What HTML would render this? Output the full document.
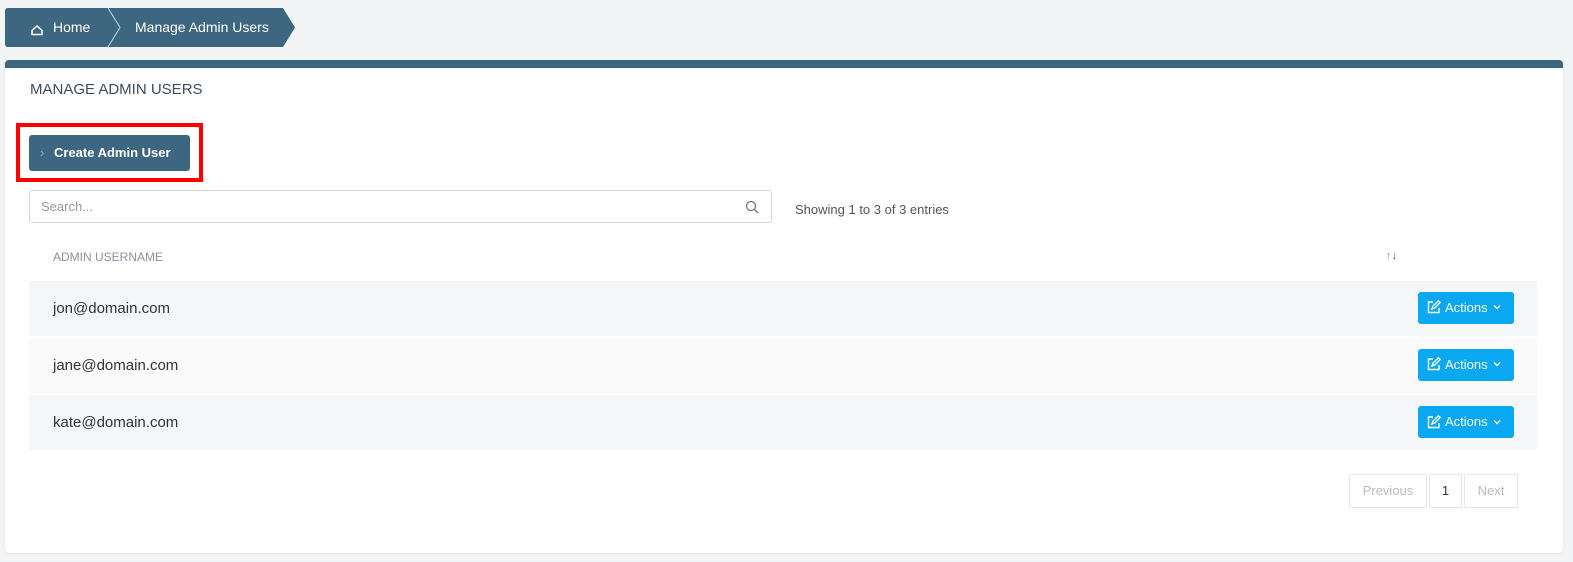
<!DOCTYPE html>
<html><head><style>
*{box-sizing:border-box;margin:0;padding:0}
body{width:1573px;height:562px;background:#f2f4f6;font-family:"Liberation Sans",sans-serif;position:relative;overflow:hidden;color:#333}
.bc{position:absolute;left:5px;top:8px;height:39px;width:290px}
.card{position:absolute;left:5px;top:60px;width:1558px;height:493px;background:#fff;border-top:8px solid #3d6680;border-radius:4px;box-shadow:0 1px 2px rgba(0,0,0,.08)}
.t{position:absolute;font-size:14px}
.row{position:absolute;left:29px;width:1508px;height:55px}
.act{position:absolute;left:1418px;width:96px;height:32px;background:#0aa8f0;border-radius:3px;color:#fff;font-size:13px;line-height:32px;padding-left:27px}
.pg{position:absolute;top:474px;height:34px;border:1px solid #e3e6ea;border-radius:2px;color:#bbb;font-size:13px;line-height:32px;text-align:center}
</style></head><body>
<svg class="bc" viewBox="0 0 290 39" width="290" height="39">
<path d="M3 0H278L290 19.5L278 39H3Q0 39 0 36V3Q0 0 3 0Z" fill="#3d6680"/>
<path d="M103 0L115 19.5L103 39" fill="none" stroke="#c9d5de" stroke-width="1"/>
<path d="M27 22.5L32 18L37 22.5V26.5H27Z" fill="none" stroke="#fff" stroke-width="1.5"/>
<text x="48" y="24" fill="#fff" font-size="14" font-family="Liberation Sans">Home</text>
<text x="130" y="24" fill="#fff" font-size="14" font-family="Liberation Sans">Manage Admin Users</text>
</svg>
<div class="card"></div>
<div class="t" style="left:30px;top:81px;color:#3b4e5e;font-size:15px">MANAGE ADMIN USERS</div>
<div style="position:absolute;left:16px;top:123px;width:187px;height:59px;border:4px solid #f00"></div>
<div style="position:absolute;left:29px;top:135px;width:161px;height:36px;background:#3d6680;border-radius:3px;color:#fff;font-weight:bold;font-size:13px;line-height:36px;padding-left:25px"><span style="position:absolute;left:11px;color:#6ab8f0;font-weight:normal">›</span>Create Admin User</div>
<div style="position:absolute;left:29px;top:190px;width:743px;height:33px;border:1px solid #cfd8e2;border-radius:3px;font-size:13px;color:#999;line-height:31px;padding-left:11px">Search...
<svg style="position:absolute;right:12px;top:9px" width="14" height="14"><circle cx="6" cy="6" r="4.5" fill="none" stroke="#777" stroke-width="1.3"/><path d="M9.5 9.5L13 13" stroke="#777" stroke-width="1.3"/></svg></div>
<div class="t" style="left:795px;top:202px;font-size:13px;color:#555">Showing 1 to 3 of 3 entries</div>
<div class="t" style="left:53px;top:250px;font-size:12px;color:#8a93a0">ADMIN USERNAME</div>
<div class="t" style="left:1386px;top:250px;font-size:11px;color:#8a93a0">↑<span style="color:#555">↓</span></div>
<div class="row" style="top:281px;background:#f4f6f8"></div>
<div class="row" style="top:338px;background:#fafafa"></div>
<div class="row" style="top:395px;background:#f4f6f8"></div>
<div class="t" style="left:53px;top:300px;font-size:15px">jon@domain.com</div>
<div class="t" style="left:53px;top:357px;font-size:15px">jane@domain.com</div>
<div class="t" style="left:53px;top:414px;font-size:15px">kate@domain.com</div>
<div class="act" style="top:292px">Actions</div>
<div class="act" style="top:349px">Actions</div>
<div class="act" style="top:406px">Actions</div>
<svg style="position:absolute;left:1427px;top:300px" width="80" height="130"><g fill="none" stroke="#fff" stroke-width="1.4"><g id="g"><path d="M6 2H1.5V12.5H12V8M5 9L6 6L11.5 0.8L13.2 2.5L7.7 8Z"/><path d="M67 5.5L70 8.5L73 5.5"/></g><use href="#g" y="57"/><use href="#g" y="115"/></g></svg>
<div class="pg" style="left:1349px;width:78px">Previous</div>
<div class="pg" style="left:1429px;width:33px;color:#333">1</div>
<div class="pg" style="left:1464px;width:54px">Next</div>
</body></html>
